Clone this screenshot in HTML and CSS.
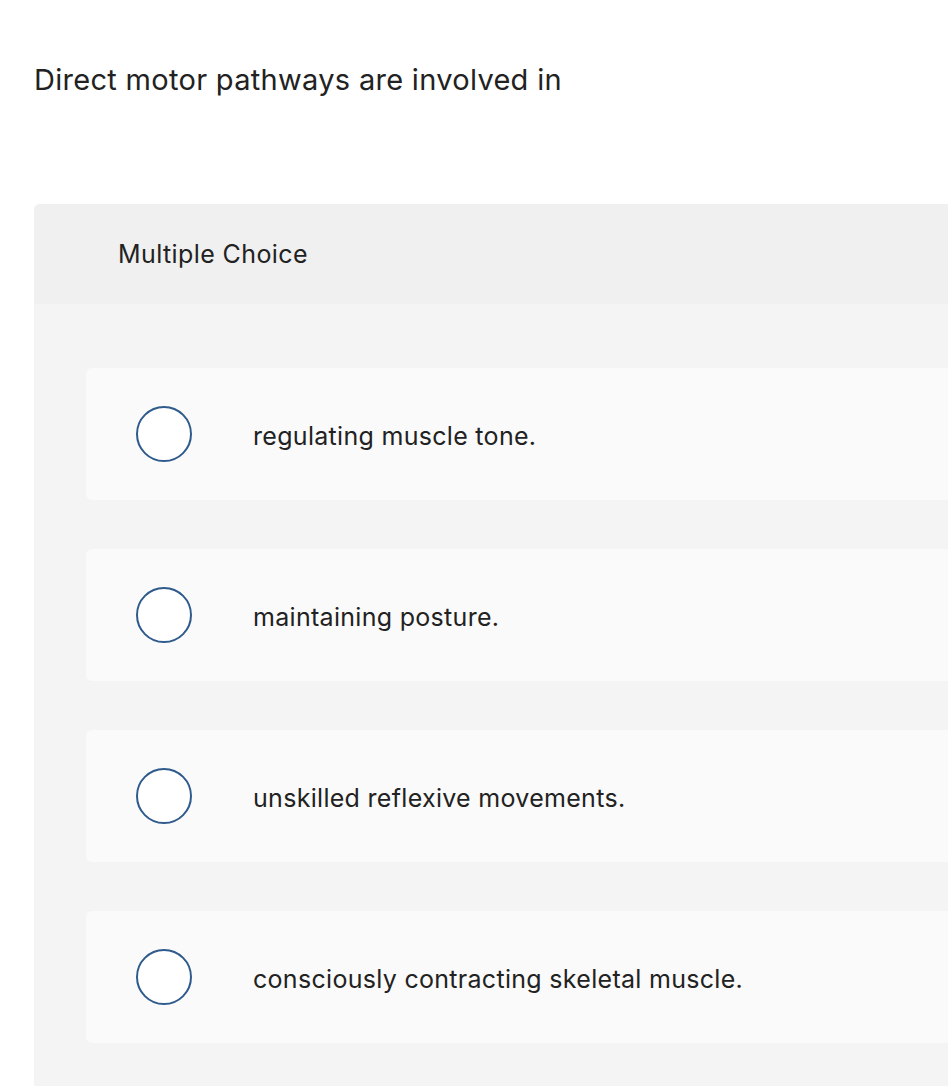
FILE: index.html
```html
<!DOCTYPE html>
<html>
<head>
<meta charset="utf-8">
<link rel="stylesheet" href="styles.css">
</head>
<body>
<div class="page">
  <h1 class="question">Direct motor pathways are involved in</h1>
  <section class="panel">
    <div class="panel-header">Multiple Choice</div>
    <div class="panel-body">
      <label class="option"><span class="radio"></span><span class="option-text">regulating muscle tone.</span></label>
      <label class="option"><span class="radio"></span><span class="option-text">maintaining posture.</span></label>
      <label class="option"><span class="radio"></span><span class="option-text">unskilled reflexive movements.</span></label>
      <label class="option"><span class="radio"></span><span class="option-text">consciously contracting skeletal muscle.</span></label>
    </div>
  </section>
</div>
</body>
</html>
```
FILE: styles.css
```css
html, body {
  margin: 0;
  padding: 0;
  background: #ffffff;
  overflow: hidden;
}
body {
  font-family: "Inter", "Open Sans", sans-serif;
  color: #222222;
}
.page {
  padding: 0 0 0 34px;
}
.question {
  margin: 0;
  padding-top: 62px;
  height: 204px;
  box-sizing: border-box;
  font-size: 29px;
  font-weight: 400;
  line-height: 36px;
  letter-spacing: 0.3px;
}
.panel {
  width: 1000px;
  border-radius: 6px 0 0 0;
  overflow: hidden;
  background: #f4f4f4;
}
.panel-header {
  height: 100px;
  box-sizing: border-box;
  background: #f0f0f0;
  padding-left: 84px;
  display: flex;
  align-items: center;
  font-size: 25px;
  letter-spacing: 0.4px;
}
.panel-body {
  padding: 64px 0 60px 52px;
  display: flex;
  flex-direction: column;
  gap: 49px;
}
.option {
  height: 132px;
  background: #fafafa;
  border-radius: 6px;
  display: flex;
  align-items: center;
  padding-left: 50px;
}
.radio {
  width: 52px;
  height: 52px;
  border: 2px solid #2e5a8c;
  border-radius: 50%;
  background: #ffffff;
  flex: none;
}
.option-text {
  margin-left: 61px;
  padding-top: 3px;
  font-size: 25px;
  letter-spacing: 0.3px;
}
```
